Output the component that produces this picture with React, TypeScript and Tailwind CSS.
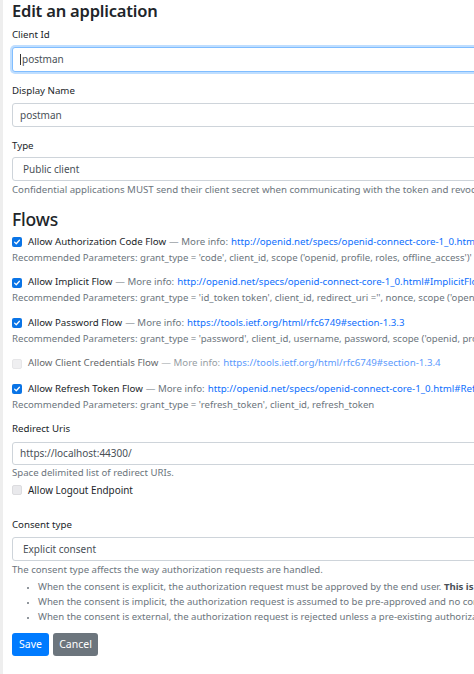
import React from 'react'

const font = { fontFamily: '"Noto Sans", "Open Sans", sans-serif' }

function Label({ text, className = '' }: { text: string; className?: string }) {
  return <div className={`text-[9.7px] leading-[14px] text-[#212529] ${className}`}>{text}</div>
}

function Field({ value, focused = false, select = false, className = '' }: { value: string; focused?: boolean; select?: boolean; className?: string }) {
  return (
    <div
      className={`w-[900px] rounded-[3px] border bg-white flex items-center text-[10px] text-[#495057] ${
        focused ? 'border-[#80bdff] shadow-[0_0_0_2px_rgba(0,123,255,0.25)]' : 'border-[#ced4da]'
      } ${select ? 'pl-[10px]' : 'pl-[7px]'} ${className}`}
    >
      {focused && <span className="w-px h-[11px] bg-[#333] mr-[1px]" />}
      {value}
    </div>
  )
}

function Check({ checked }: { checked: boolean }) {
  return checked ? (
    <span className="w-[10px] h-[10px] rounded-[2px] bg-[#0a74e6] flex items-center justify-center shrink-0">
      <svg viewBox="0 0 10 10" className="w-[8px] h-[8px]">
        <path d="M2 5.2 L4.1 7.2 L8 2.8" fill="none" stroke="white" strokeWidth="1.6" strokeLinecap="round" strokeLinejoin="round" />
      </svg>
    </span>
  ) : (
    <span className="w-[10px] h-[10px] rounded-[2px] bg-[#e9e9ec] border border-[#dcdcdf] shrink-0" />
  )
}

interface Flow {
  name: string
  link: string
  rec?: string
  checked: boolean
}

const flows: Flow[] = [
  {
    name: 'Allow Authorization Code Flow',
    link: 'http://openid.net/specs/openid-connect-core-1_0.html#CodeFlowAuth',
    rec: "Recommended Parameters: grant_type = 'code', client_id, scope ('openid, profile, roles, offline_access')'",
    checked: true,
  },
  {
    name: 'Allow Implicit Flow',
    link: 'http://openid.net/specs/openid-connect-core-1_0.html#ImplicitFlowAuth',
    rec: "Recommended Parameters: grant_type = 'id_token token', client_id, redirect_uri ='', nonce, scope ('openid, profile')",
    checked: true,
  },
  {
    name: 'Allow Password Flow',
    link: 'https://tools.ietf.org/html/rfc6749#section-1.3.3',
    rec: "Recommended Parameters: grant_type = 'password', client_id, username, password, scope ('openid, profile, roles')",
    checked: true,
  },
  {
    name: 'Allow Client Credentials Flow',
    link: 'https://tools.ietf.org/html/rfc6749#section-1.3.4',
    checked: false,
  },
  {
    name: 'Allow Refresh Token Flow',
    link: 'http://openid.net/specs/openid-connect-core-1_0.html#RefreshTokens',
    rec: "Recommended Parameters: grant_type = 'refresh_token', client_id, refresh_token",
    checked: true,
  },
]

export default function App() {
  return (
    <div className="w-[474px] h-[674px] overflow-hidden bg-white flex" style={font}>
      <div className="w-[3px] shrink-0 bg-[#eeeeee]" />
      <div className="pl-[9px] whitespace-nowrap flex flex-col">
        <h1 className="text-[16.5px] leading-[22px] font-semibold tracking-[-0.2px] text-[#212529]">Edit an application</h1>

        <Label text="Client Id" className="mt-[6px]" />
        <Field value="postman" focused className="mt-[5px] h-[25px]" />

        <Label text="Display Name" className="mt-[12px]" />
        <Field value="postman" className="mt-[5px] h-[24px]" />

        <Label text="Type" className="mt-[12px]" />
        <Field value="Public client" select className="mt-[4px] h-[24px]" />
        <div className="mt-[2px] text-[9.7px] leading-[14px] text-[#6c757d]">
          Confidential applications MUST send their client secret when communicating with the token and revocation endpoints.
        </div>

        <h2 className="mt-[9px] text-[17.5px] leading-[26px] font-medium tracking-[-0.2px] text-[#212529]">Flows</h2>

        <div className="mt-[2.5px] flex flex-col gap-[10.5px]">
          {flows.map((f) => (
            <div key={f.name} className="flex flex-col">
              <div className={`flex items-center h-[15px] text-[9.7px] ${f.checked ? '' : 'opacity-70'}`}>
                <Check checked={f.checked} />
                <span className="ml-[6px] text-[#212529]">{f.name}</span>
                <span className="ml-[3px] text-[#6c757d]">— More info:</span>
                <span className="ml-[3px] text-[#0d6efd]">{f.link}</span>
              </div>
              {f.rec && <div className="text-[9.6px] leading-[15px] text-[#6c757d]">{f.rec}</div>}
            </div>
          ))}
        </div>

        <Label text="Redirect Uris" className="mt-[10.5px]" />
        <Field value="https://localhost:44300/" className="mt-[6px] h-[23px]" />
        <div className="mt-[1px] text-[9.6px] leading-[14px] text-[#6c757d]">Space delimited list of redirect URIs.</div>
        <div className="mt-[2.5px] flex items-center h-[15px] text-[9.9px]">
          <Check checked={false} />
          <span className="ml-[6px] text-[#212529]">Allow Logout Endpoint</span>
        </div>

        <Label text="Consent type" className="mt-[20.5px]" />
        <Field value="Explicit consent" select className="mt-[5px] h-[24px]" />
        <div className="mt-[2px] text-[9.6px] leading-[14px] text-[#6c757d]">
          The consent type affects the way authorization requests are handled.
        </div>
        <ul className="mt-[1.5px] pl-[26px] list-disc text-[9.6px] leading-[15px] text-[#6c757d] marker:text-[7px]">
          <li>
            When the consent is explicit, the authorization request must be approved by the end user.{' '}
            <b className="text-[#495057]">This is the recommended option.</b>
          </li>
          <li>When the consent is implicit, the authorization request is assumed to be pre-approved and no consent form is displayed.</li>
          <li>When the consent is external, the authorization request is rejected unless a pre-existing authorization is granted.</li>
        </ul>

        <div className="mt-[9.5px] flex gap-[4px]">
          <button className="h-[23px] w-[37px] rounded-[3px] bg-[#007bff] text-white text-[10.5px]">Save</button>
          <button className="h-[23px] w-[45px] rounded-[3px] bg-[#6c757d] text-white text-[10.5px]">Cancel</button>
        </div>
      </div>
    </div>
  )
}
